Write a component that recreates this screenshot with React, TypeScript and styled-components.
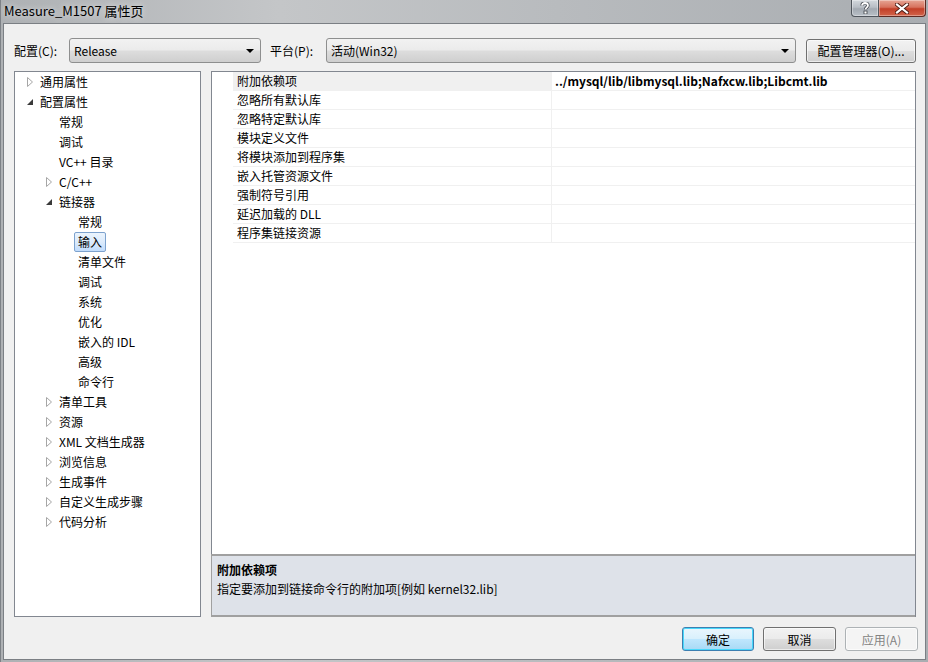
import React from 'react';
import styled, { createGlobalStyle } from 'styled-components';

const Global = createGlobalStyle`
  html, body { margin: 0; padding: 0; width: 928px; height: 662px; overflow: hidden; }
  body {
    font-family: "Noto Sans CJK SC", "Noto Sans", sans-serif;
    font-size: 12px;
    color: #000;
  }
  * { box-sizing: border-box; }
`;

const Window = styled.div`
  width: 928px;
  height: 662px;
  display: flex;
  flex-direction: column;
  padding: 0 2px 2px 2px;
  background: linear-gradient(to right, #aeb1b4 0%, #c4c6c8 30%, #b8bbbe 60%, #a9adb1 100%);
  border-left: 1px solid #7d8186;
`;

const TitleBar = styled.div`
  height: 23px;
  display: flex;
  align-items: flex-start;
  padding-left: 1px;
  flex-shrink: 0;
`;

const TitleText = styled.div`
  font-size: 13px;
  line-height: 22px;
  color: #000;
  text-shadow: 0 0 6px rgba(255, 255, 255, 0.8);
`;

const CaptionButtons = styled.div`
  margin-left: auto;
  display: flex;
`;

const CaptionButton = styled.div<{ $close?: boolean }>`
  width: ${(p) => (p.$close ? 47 : 28)}px;
  height: 17px;
  display: flex;
  align-items: center;
  justify-content: center;
  border: 1px solid ${(p) => (p.$close ? '#5e2a22' : '#4f555c')};
  border-top: none;
  border-radius: ${(p) => (p.$close ? '0 0 4px 0' : '0 0 0 4px')};
  ${(p) => (p.$close ? 'border-left: none;' : '')}
  background: ${(p) =>
    p.$close
      ? 'linear-gradient(to bottom, #e6a595 0%, #d7725e 45%, #c23f28 55%, #d2644a 100%)'
      : 'linear-gradient(to bottom, #d3d8dd 0%, #b8bec5 45%, #a2a9b1 55%, #b9c0c7 100%)'};
  box-shadow: inset 0 0 0 1px rgba(255, 255, 255, 0.35);
`;

const Client = styled.div`
  flex: 1;
  display: flex;
  flex-direction: column;
  border: 1px solid #7b7f84;
  background: #f0f0f0;
  padding: 14px 9px 8px 10px;
`;

const Toolbar = styled.div`
  height: 25px;
  display: flex;
  align-items: center;
  flex-shrink: 0;
`;

const Label = styled.div<{ $w: number; $ml?: number }>`
  width: ${(p) => p.$w}px;
  margin-left: ${(p) => p.$ml ?? 0}px;
  flex-shrink: 0;
  white-space: nowrap;
`;

const Combo = styled.div<{ $w?: number }>`
  ${(p) => (p.$w ? `width: ${p.$w}px; flex-shrink: 0;` : 'flex: 1;')}
  height: 25px;
  display: flex;
  align-items: center;
  padding: 0 6px 0 4px;
  border: 1px solid #8e8f8f;
  border-radius: 3px;
  background: linear-gradient(to bottom, #f2f2f2 0%, #ebebeb 48%, #dddddd 52%, #cfcfcf 100%);
`;

const ComboText = styled.span`
  flex: 1;
`;

const DropArrow = styled.span`
  width: 0;
  height: 0;
  border-left: 4px solid transparent;
  border-right: 4px solid transparent;
  border-top: 4px solid #000;
`;

const PushButton = styled.div<{ $w: number; $variant?: 'default' | 'disabled' | 'normal'; $ml?: number }>`
  width: ${(p) => p.$w}px;
  height: 24px;
  margin-left: ${(p) => p.$ml ?? 0}px;
  flex-shrink: 0;
  display: flex;
  align-items: center;
  justify-content: center;
  border-radius: 3px;
  white-space: nowrap;
  border: 1px solid
    ${(p) => (p.$variant === 'default' ? '#3c7fb1' : p.$variant === 'disabled' ? '#adb2b5' : '#707070')};
  color: ${(p) => (p.$variant === 'disabled' ? '#838383' : '#000')};
  background: ${(p) =>
    p.$variant === 'default'
      ? 'linear-gradient(to bottom, #eaf6fd 0%, #d9f0fc 48%, #bee6fd 52%, #a7d9f5 100%)'
      : p.$variant === 'disabled'
      ? '#f4f4f4'
      : 'linear-gradient(to bottom, #f2f2f2 0%, #ebebeb 48%, #dddddd 52%, #cfcfcf 100%)'};
  box-shadow: ${(p) =>
    p.$variant === 'default' ? 'inset 0 0 0 1px #48d8fb' : 'inset 0 0 0 1px rgba(255,255,255,0.6)'};
`;

const Main = styled.div`
  flex: 1;
  margin-top: 8px;
  display: flex;
  gap: 10px;
  min-height: 0;
`;

const Tree = styled.div`
  width: 187px;
  flex-shrink: 0;
  border: 1px solid #828790;
  background: #fff;
  display: flex;
  flex-direction: column;
`;

const TreeRow = styled.div<{ $level: number }>`
  height: 20px;
  display: flex;
  align-items: center;
  padding-left: ${(p) => 8 + p.$level * 19}px;
  white-space: nowrap;
`;

const ArrowSlot = styled.div`
  width: 13px;
  padding-left: 4px;
  display: flex;
  align-items: center;
  flex-shrink: 0;
`;

const TreeLabel = styled.span<{ $selected?: boolean }>`
  height: 20px;
  line-height: 18px;
  padding: 0 3px;
  border: 1px solid ${(p) => (p.$selected ? '#7da2ce' : 'transparent')};
  border-radius: 2px;
  background: ${(p) => (p.$selected ? 'linear-gradient(to bottom, #ebf4fd 0%, #dcebfc 50%, #c1dcfc 100%)' : 'transparent')};
`;

const RightPanel = styled.div`
  flex: 1;
  display: flex;
  flex-direction: column;
  border: 1px solid #828790;
  border-bottom: none;
  min-width: 0;
`;

const Grid = styled.div`
  flex: 1;
  background: #fff;
  display: flex;
  flex-direction: column;
`;

const GridRow = styled.div`
  height: 19px;
  display: flex;
`;

const Gutter = styled.div`
  width: 21px;
  flex-shrink: 0;
`;

const NameCell = styled.div<{ $selected?: boolean }>`
  width: 319px;
  flex-shrink: 0;
  padding-left: 4px;
  line-height: 18px;
  border-bottom: 1px solid #f0f0f0;
  border-right: 1px solid #f0f0f0;
  background: ${(p) => (p.$selected ? '#f0f0f0' : '#fff')};
  white-space: nowrap;
`;

const ValueCell = styled.div`
  flex: 1;
  padding-left: 3px;
  line-height: 18px;
  border-bottom: 1px solid #f0f0f0;
  font-weight: bold;
  white-space: nowrap;
`;

const Description = styled.div`
  height: 63px;
  flex-shrink: 0;
  border-top: 2px solid #a0a0a0;
  border-bottom: 2px solid #a0a0a0;
  margin-left: -1px;
  border-left: 1px solid #a0a0a0;
  background: #dee2e9;
  padding: 4px 5px 0 5px;
  line-height: 19px;
`;

const DescTitle = styled.div`
  font-weight: bold;
`;

const ButtonRow = styled.div`
  height: 24px;
  margin-top: 10px;
  margin-right: -2px;
  display: flex;
  justify-content: flex-end;
  gap: 9px;
  flex-shrink: 0;
`;

const Collapsed = () => (
  <svg width="7" height="10" viewBox="0 0 7 10">
    <path d="M0.5 0.5 L5.5 5 L0.5 9.5 Z" fill="#fff" stroke="#a6a6a6" strokeWidth="1" />
  </svg>
);

const Expanded = () => (
  <svg width="6" height="6" viewBox="0 0 6 6">
    <path d="M6 0 L6 6 L0 6 Z" fill="#3a3a3a" />
  </svg>
);

type Node = { label: string; level: number; arrow?: 'c' | 'e'; selected?: boolean };

const tree: Node[] = [
  { label: '通用属性', level: 0, arrow: 'c' },
  { label: '配置属性', level: 0, arrow: 'e' },
  { label: '常规', level: 1 },
  { label: '调试', level: 1 },
  { label: 'VC++ 目录', level: 1 },
  { label: 'C/C++', level: 1, arrow: 'c' },
  { label: '链接器', level: 1, arrow: 'e' },
  { label: '常规', level: 2 },
  { label: '输入', level: 2, selected: true },
  { label: '清单文件', level: 2 },
  { label: '调试', level: 2 },
  { label: '系统', level: 2 },
  { label: '优化', level: 2 },
  { label: '嵌入的 IDL', level: 2 },
  { label: '高级', level: 2 },
  { label: '命令行', level: 2 },
  { label: '清单工具', level: 1, arrow: 'c' },
  { label: '资源', level: 1, arrow: 'c' },
  { label: 'XML 文档生成器', level: 1, arrow: 'c' },
  { label: '浏览信息', level: 1, arrow: 'c' },
  { label: '生成事件', level: 1, arrow: 'c' },
  { label: '自定义生成步骤', level: 1, arrow: 'c' },
  { label: '代码分析', level: 1, arrow: 'c' },
];

const props: { name: string; value?: string }[] = [
  { name: '附加依赖项', value: '../mysql/lib/libmysql.lib;Nafxcw.lib;Libcmt.lib' },
  { name: '忽略所有默认库' },
  { name: '忽略特定默认库' },
  { name: '模块定义文件' },
  { name: '将模块添加到程序集' },
  { name: '嵌入托管资源文件' },
  { name: '强制符号引用' },
  { name: '延迟加载的 DLL' },
  { name: '程序集链接资源' },
];

export default function App() {
  return (
    <>
      <Global />
      <Window>
        <TitleBar>
          <TitleText>Measure_M1507 属性页</TitleText>
          <CaptionButtons>
            <CaptionButton>
              <svg width="10" height="12" viewBox="0 0 10 12">
                <path
                  d="M2 3.5 C2 1.5 3.5 1 5 1 C6.8 1 8 2 8 3.5 C8 5.2 5.5 5.5 5.5 7.5"
                  fill="none"
                  stroke="#3a3f45"
                  strokeWidth="3.2"
                />
                <path
                  d="M2 3.5 C2 1.5 3.5 1 5 1 C6.8 1 8 2 8 3.5 C8 5.2 5.5 5.5 5.5 7.5"
                  fill="none"
                  stroke="#fff"
                  strokeWidth="1.8"
                />
                <rect x="4" y="9" width="3" height="3" fill="#fff" stroke="#3a3f45" strokeWidth="0.8" />
              </svg>
            </CaptionButton>
            <CaptionButton $close>
              <svg width="14" height="11" viewBox="0 0 14 11">
                <path d="M2 1.5 L12 9.5 M12 1.5 L2 9.5" stroke="#4a1a12" strokeWidth="4" strokeLinecap="square" />
                <path d="M2 1.5 L12 9.5 M12 1.5 L2 9.5" stroke="#fff" strokeWidth="2.2" strokeLinecap="square" />
              </svg>
            </CaptionButton>
          </CaptionButtons>
        </TitleBar>
        <Client>
          <Toolbar>
            <Label $w={55}>配置(C):</Label>
            <Combo $w={192}>
              <ComboText>Release</ComboText>
              <DropArrow />
            </Combo>
            <Label $w={56} $ml={9}>
              平台(P):
            </Label>
            <Combo>
              <ComboText>活动(Win32)</ComboText>
              <DropArrow />
            </Combo>
            <PushButton $w={110} $ml={10}>
              配置管理器(O)...
            </PushButton>
          </Toolbar>
          <Main>
            <Tree>
              {tree.map((n, i) => (
                <TreeRow key={i} $level={n.level}>
                  <ArrowSlot>{n.arrow === 'c' ? <Collapsed /> : n.arrow === 'e' ? <Expanded /> : null}</ArrowSlot>
                  <TreeLabel $selected={n.selected}>{n.label}</TreeLabel>
                </TreeRow>
              ))}
            </Tree>
            <RightPanel>
              <Grid>
                {props.map((p, i) => (
                  <GridRow key={i}>
                    <Gutter />
                    <NameCell $selected={i === 0}>{p.name}</NameCell>
                    <ValueCell>{p.value ?? ''}</ValueCell>
                  </GridRow>
                ))}
              </Grid>
              <Description>
                <DescTitle>附加依赖项</DescTitle>
                <div>指定要添加到链接命令行的附加项[例如 kernel32.lib]</div>
              </Description>
            </RightPanel>
          </Main>
          <ButtonRow>
            <PushButton $w={72} $variant="default">
              确定
            </PushButton>
            <PushButton $w={73}>取消</PushButton>
            <PushButton $w={73} $variant="disabled">
              应用(A)
            </PushButton>
          </ButtonRow>
        </Client>
      </Window>
    </>
  );
}
